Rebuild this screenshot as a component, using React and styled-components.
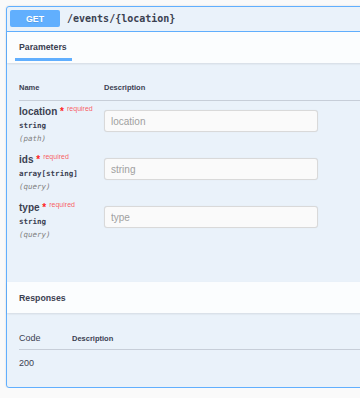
import React from "react";
import styled, { createGlobalStyle } from "styled-components";

const GlobalStyle = createGlobalStyle`
  html, body {
    margin: 0;
    padding: 0;
    background: #fafafa;
    overflow: hidden;
  }
  body {
    font-family: "Liberation Sans", Arial, sans-serif;
    color: #3b4151;
  }
`;

const params = [
  { name: "location", type: "string", where: "(path)", placeholder: "location" },
  { name: "ids", type: "array[string]", where: "(query)", placeholder: "string" },
  { name: "type", type: "string", where: "(query)", placeholder: "type" },
];

export default function App() {
  return (
    <>
      <GlobalStyle />
      <Page>
        <OpBlock>
          <Summary>
            <Method>GET</Method>
            <Path>/events/{"{location}"}</Path>
          </Summary>

          <SectionHeader>
            <TabItem>Parameters</TabItem>
          </SectionHeader>

          <ParamsBody>
            <ParamHead>
              <span>Name</span>
              <span>Description</span>
            </ParamHead>
            {params.map((p) => (
              <ParamRow key={p.name}>
                <ParamInfo>
                  <ParamName>
                    {p.name}
                    <Star>&nbsp;*</Star>
                    <Required>required</Required>
                  </ParamName>
                  <ParamType>{p.type}</ParamType>
                  <ParamIn>{p.where}</ParamIn>
                </ParamInfo>
                <div>
                  <Input type="text" placeholder={p.placeholder} />
                </div>
              </ParamRow>
            ))}
          </ParamsBody>

          <SectionHeader>
            <SectionTitle>Responses</SectionTitle>
          </SectionHeader>

          <ResponsesBody>
            <ResponseHead>
              <CodeCol>Code</CodeCol>
              <DescHead>Description</DescHead>
            </ResponseHead>
            <ResponseRow>
              <CodeCol>200</CodeCol>
              <span />
            </ResponseRow>
          </ResponsesBody>
        </OpBlock>
      </Page>
    </>
  );
}

const Page = styled.div`
  padding: 6px 0 0 6px;
`;

const OpBlock = styled.div`
  width: 420px;
  border: 1px solid #61affe;
  border-radius: 3px;
  background: rgba(97, 175, 254, 0.1);
  box-shadow: 0 0 2px rgba(0, 0, 0, 0.15);
`;

const Summary = styled.div`
  display: flex;
  align-items: center;
  padding: 3px 3px 4px;
  border-bottom: 1px solid #61affe;
`;

const Method = styled.span`
  width: 50px;
  height: 17px;
  display: flex;
  align-items: center;
  justify-content: center;
  background: #61affe;
  border-radius: 2px;
  color: #fff;
  font-size: 8.75px;
  font-weight: 700;
  text-shadow: 0 1px 0 rgba(0, 0, 0, 0.1);
`;

const Path = styled.span`
  margin-left: 7px;
  font-family: "DejaVu Sans Mono", monospace;
  font-size: 10px;
  font-weight: 600;
  color: #3b4151;
`;

const SectionHeader = styled.div`
  height: 31px;
  display: flex;
  align-items: center;
  padding: 0 12px;
  background: rgba(255, 255, 255, 0.8);
  box-shadow: 0 1px 2px rgba(0, 0, 0, 0.1);
`;

const TabItem = styled.h4`
  position: relative;
  margin: 0;
  height: 31px;
  line-height: 31px;
  font-size: 8.75px;
  font-weight: 700;
  color: #3b4151;

  &::after {
    content: "";
    position: absolute;
    left: -4px;
    bottom: 2px;
    width: calc(100% + 9px);
    height: 3px;
    background: #61affe;
  }
`;

const SectionTitle = styled.h4`
  margin: 0;
  font-size: 8.75px;
  font-weight: 700;
  color: #3b4151;
`;

const ParamsBody = styled.div`
  padding: 20px 12px 37px;
`;

const ParamHead = styled.div`
  display: grid;
  grid-template-columns: 85px 1fr;
  height: 9px;
  line-height: 9px;
  padding-bottom: 8px;
  border-bottom: 1px solid rgba(59, 65, 81, 0.2);
  font-size: 7.5px;
  font-weight: 700;
`;

const ParamRow = styled.div`
  display: grid;
  grid-template-columns: 85px 1fr;
  padding: 5px 0 6px;
`;

const ParamInfo = styled.div`
  display: flex;
  flex-direction: column;
`;

const ParamName = styled.div`
  height: 11px;
  line-height: 11px;
  font-size: 10px;
  font-weight: 700;
  white-space: nowrap;
`;

const Star = styled.span`
  color: #f22;
`;

const Required = styled.span`
  position: relative;
  top: -4px;
  padding-left: 3px;
  font-size: 7px;
  font-weight: 400;
  color: rgba(255, 0, 0, 0.65);
`;

const ParamType = styled.div`
  padding: 4px 0;
  line-height: 9px;
  font-family: "DejaVu Sans Mono", monospace;
  font-size: 7.5px;
  font-weight: 700;
`;

const ParamIn = styled.div`
  line-height: 9px;
  font-family: "DejaVu Sans Mono", monospace;
  font-size: 7.5px;
  font-style: italic;
  color: #808080;
`;

const Input = styled.input`
  box-sizing: border-box;
  display: block;
  margin-top: 4px;
  width: 214px;
  height: 22px;
  padding: 0 6px;
  background: #fafafa;
  border: 1px solid #d9d9d9;
  border-radius: 3px;
  box-shadow: 0 0 1px rgba(0, 0, 0, 0.1);
  font-family: "Liberation Sans", Arial, sans-serif;
  font-size: 10px;
  color: #3b4151;
  outline: none;

  &::placeholder {
    color: #a0a0a0;
  }
`;

const ResponsesBody = styled.div`
  padding: 20px 12px 19px;
`;

const ResponseHead = styled.div`
  display: grid;
  grid-template-columns: 53px 1fr;
  align-items: center;
  height: 10px;
  padding-bottom: 6px;
  border-bottom: 1px solid rgba(59, 65, 81, 0.2);
`;

const ResponseRow = styled.div`
  display: grid;
  grid-template-columns: 53px 1fr;
  align-items: center;
  height: 10px;
  padding-top: 8px;
`;

const CodeCol = styled.span`
  font-size: 9px;
  line-height: 10px;
`;

const DescHead = styled.span`
  font-size: 7.5px;
  font-weight: 700;
`;
